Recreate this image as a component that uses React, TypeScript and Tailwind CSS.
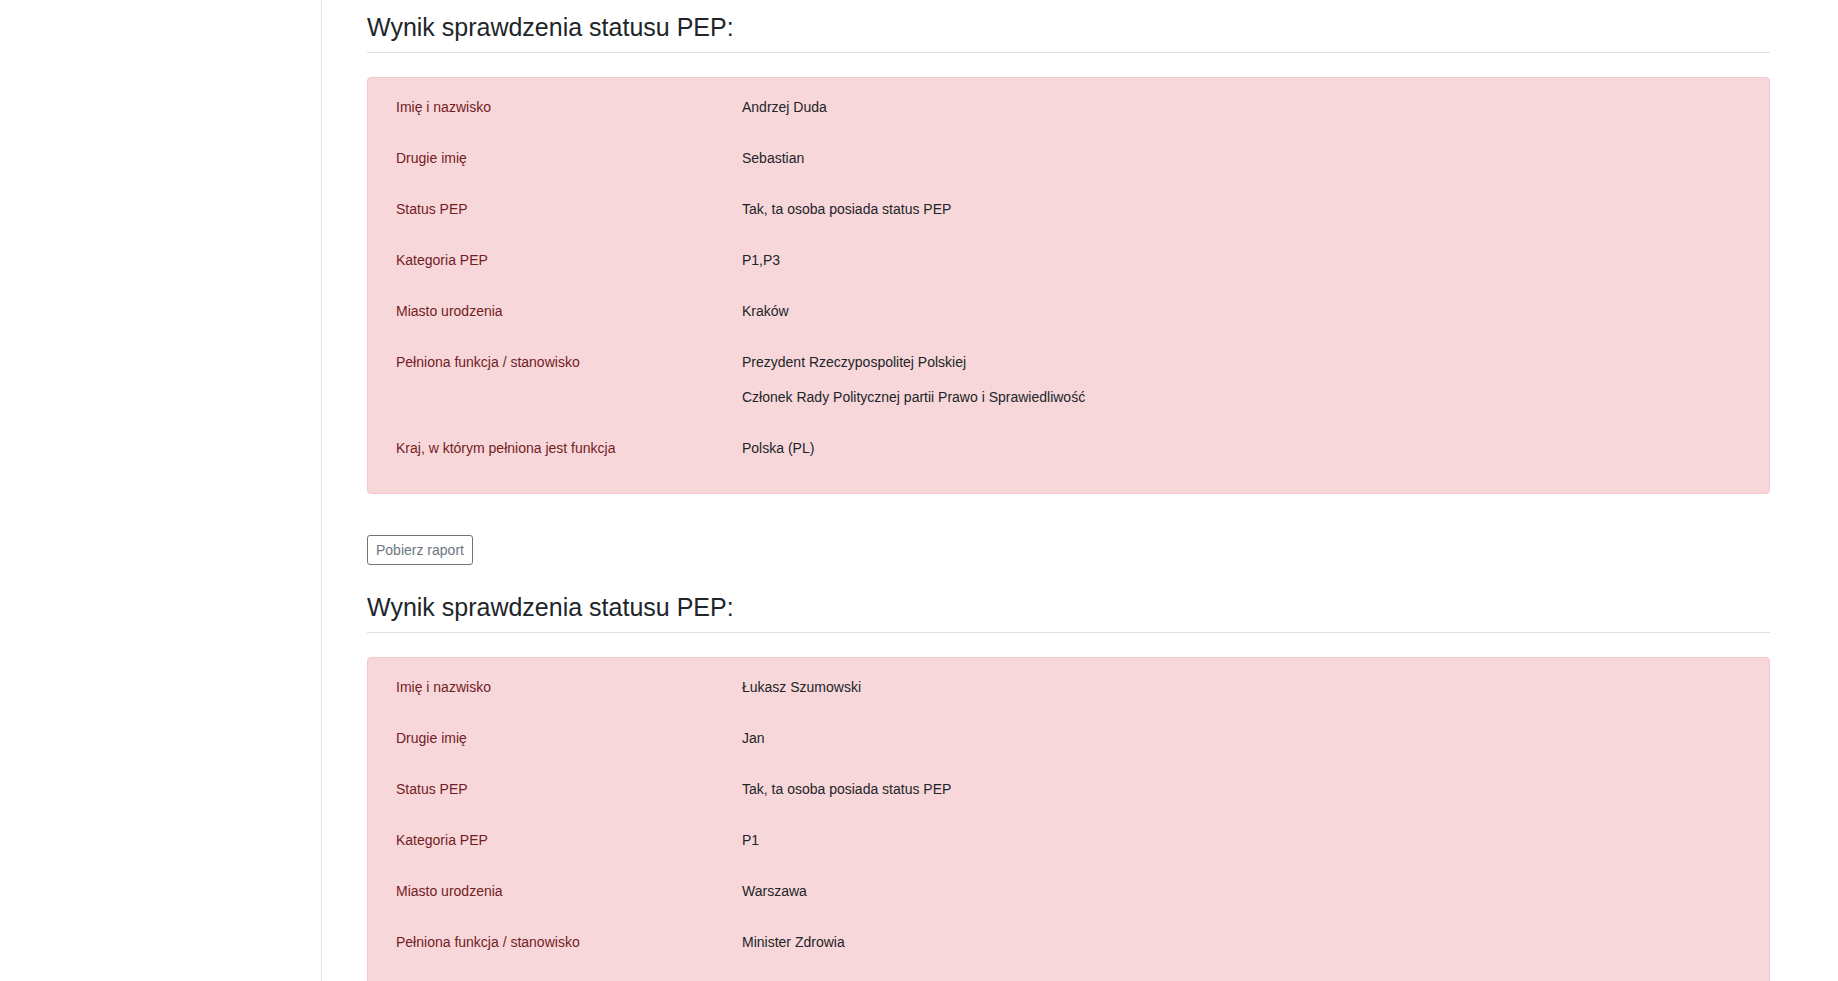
import React from 'react';

type Row = { label: string; values: string[] };

const results: Row[][] = [
  [
    { label: 'Imię i nazwisko', values: ['Andrzej Duda'] },
    { label: 'Drugie imię', values: ['Sebastian'] },
    { label: 'Status PEP', values: ['Tak, ta osoba posiada status PEP'] },
    { label: 'Kategoria PEP', values: ['P1,P3'] },
    { label: 'Miasto urodzenia', values: ['Kraków'] },
    {
      label: 'Pełniona funkcja / stanowisko',
      values: ['Prezydent Rzeczypospolitej Polskiej', 'Członek Rady Politycznej partii Prawo i Sprawiedliwość'],
    },
    { label: 'Kraj, w którym pełniona jest funkcja', values: ['Polska (PL)'] },
  ],
  [
    { label: 'Imię i nazwisko', values: ['Łukasz Szumowski'] },
    { label: 'Drugie imię', values: ['Jan'] },
    { label: 'Status PEP', values: ['Tak, ta osoba posiada status PEP'] },
    { label: 'Kategoria PEP', values: ['P1'] },
    { label: 'Miasto urodzenia', values: ['Warszawa'] },
    { label: 'Pełniona funkcja / stanowisko', values: ['Minister Zdrowia'] },
    { label: 'Kraj, w którym pełniona jest funkcja', values: ['Polska (PL)'] },
  ],
];

function ResultBlock({ rows }: { rows: Row[] }) {
  return (
    <section>
      <h3 className="text-[25px] leading-[30px] font-normal text-[#212529]">Wynik sprawdzenia statusu PEP:</h3>
      <hr className="mt-[10px] border-0 border-t border-[#dfdfdf]" />

      <div className="mt-[24px] rounded-[4px] border border-[#f5c6cb] bg-[#f8d7da] px-[28px] pt-[19px] pb-[4px] text-[14px] leading-[21px]">
        {rows.map((row) => (
          <div key={row.label} className="mb-[30px] flex">
            <div className="w-[346px] shrink-0 text-[#721c24]">{row.label}</div>
            <div className="flex flex-col gap-[14px] text-[#212529]">
              {row.values.map((v) => (
                <div key={v}>{v}</div>
              ))}
            </div>
          </div>
        ))}
      </div>
    </section>
  );
}

export default function App() {
  return (
    <div className="flex min-h-screen bg-white font-['Liberation_Sans',Arial,sans-serif]">
      {/* Sidebar */}
      <aside className="w-[322px] shrink-0 border-r border-[#e6e6e6] bg-white" />

      {/* Main */}
      <main className="flex-1 pl-[45px] pr-[68px] pt-[12px] pb-[40px]">
        <ResultBlock rows={results[0]} />

        <button className="mt-[41px] h-[30px] rounded-[3px] border border-[#6c757d] bg-white px-[8px] text-[14px] leading-[21px] text-[#6c757d]">
          Pobierz raport
        </button>

        <div className="mt-[27px]">
          <ResultBlock rows={results[1]} />
        </div>
      </main>
    </div>
  );
}
